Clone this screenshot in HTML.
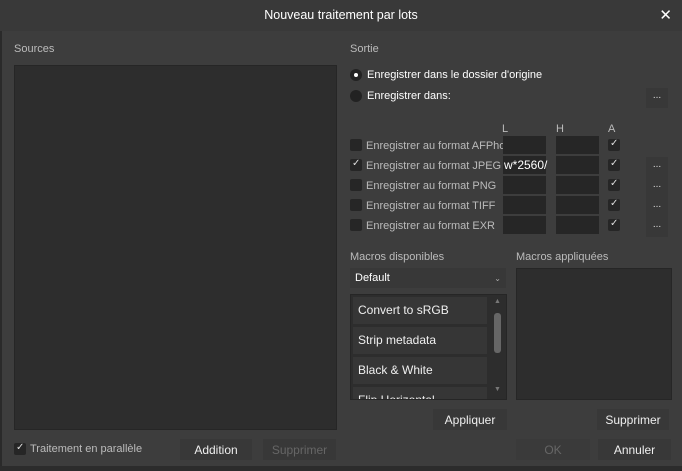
<!DOCTYPE html>
<html><head><meta charset="utf-8"><style>
*{margin:0;padding:0;box-sizing:border-box}
body{width:682px;height:471px;background:#3d3d3d;font-family:"Liberation Sans",Arial,sans-serif;font-size:11px;color:#ddd;position:relative;overflow:hidden}
.a{position:absolute}
.title{left:0;top:0;width:682px;height:31px;background:#393939;text-align:center;line-height:31px;color:#fff;font-size:12.5px}
.lbl{color:#bbb;font-size:11px;white-space:nowrap}
.fl{width:137px;overflow:hidden}
.box{background:#2d2d2d;border:1px solid #262626}
.cb{width:12px;height:12px;background:#262626;border-radius:2px}
.cb.on::after{content:"✓";color:#ddd;font-size:10px;position:absolute;left:2px;top:-1px}
.btn{background:#383838;color:#eee;font-size:12px;text-align:center}
.dots{width:22px;height:20px;background:#383838;color:#ddd;text-align:center;font-size:10px;line-height:16px}
.in{width:43px;height:18px;background:#262626}
.item{left:353px;width:134px;height:27px;background:#363636;color:#f0f0f0;font-size:12px;line-height:27px;padding-left:5px}
</style></head><body>
<div class="a title">Nouveau traitement par lots</div>
<div class="a" style="right:10px;top:6px;color:#fff;font-size:15px">✕</div>
<div class="a" style="left:0;top:31px;width:2px;height:440px;background:#2a2a2a"></div>
<div class="a lbl" style="left:14px;top:43px">Sources</div>
<div class="a box" style="left:14px;top:65px;width:323px;height:365px"></div>
<div class="a lbl" style="left:350px;top:43px">Sortie</div>
<div class="a" style="left:350px;top:69px;width:12px;height:12px;border-radius:50%;background:#222"><div class="a" style="left:4px;top:4px;width:4px;height:4px;border-radius:50%;background:#fff"></div></div>
<div class="a" style="left:367px;top:69px;color:#fff">Enregistrer dans le dossier d'origine</div>
<div class="a" style="left:350px;top:90px;width:12px;height:12px;border-radius:50%;background:#222"></div>
<div class="a" style="left:367px;top:90px;color:#fff">Enregistrer dans:</div>
<div class="a dots" style="left:646px;top:88px">...</div>
<div class="a lbl" style="left:502px;top:123px">L</div>
<div class="a lbl" style="left:556px;top:123px">H</div>
<div class="a lbl" style="left:608px;top:123px">A</div>

<div class="a cb" style="left:350px;top:139px"></div><div class="a lbl fl" style="left:366px;top:140px">Enregistrer au format AFPhoto</div>
<div class="a in" style="left:503px;top:136px"></div><div class="a in" style="left:556px;top:136px"></div><div class="a cb on" style="left:608px;top:139px"></div>

<div class="a cb on" style="left:350px;top:159px"></div><div class="a lbl fl" style="left:366px;top:160px">Enregistrer au format JPEG</div>
<div class="a in" style="left:503px;top:156px;color:#fff;font-size:12px;line-height:19px;padding-left:1px">w*2560/</div><div class="a in" style="left:556px;top:156px"></div><div class="a cb on" style="left:608px;top:159px"></div>
<div class="a dots" style="left:646px;top:157px">...</div>

<div class="a cb" style="left:350px;top:179px"></div><div class="a lbl fl" style="left:366px;top:180px">Enregistrer au format PNG</div>
<div class="a in" style="left:503px;top:176px"></div><div class="a in" style="left:556px;top:176px"></div><div class="a cb on" style="left:608px;top:179px"></div>
<div class="a dots" style="left:646px;top:177px">...</div>

<div class="a cb" style="left:350px;top:199px"></div><div class="a lbl fl" style="left:366px;top:200px">Enregistrer au format TIFF</div>
<div class="a in" style="left:503px;top:196px"></div><div class="a in" style="left:556px;top:196px"></div><div class="a cb on" style="left:608px;top:199px"></div>
<div class="a dots" style="left:646px;top:197px">...</div>

<div class="a cb" style="left:350px;top:219px"></div><div class="a lbl fl" style="left:366px;top:220px">Enregistrer au format EXR</div>
<div class="a in" style="left:503px;top:216px"></div><div class="a in" style="left:556px;top:216px"></div><div class="a cb on" style="left:608px;top:219px"></div>
<div class="a dots" style="left:646px;top:217px">...</div>

<div class="a lbl" style="left:350px;top:251px">Macros disponibles</div>
<div class="a lbl" style="left:516px;top:251px">Macros appliquées</div>
<div class="a" style="left:350px;top:268px;width:156px;height:20px;background:#383838;color:#fff;line-height:21px;padding-left:5px">Default<span style="position:absolute;right:5px;color:#aaa;font-size:8px">⌄</span></div>
<div class="a box" style="left:350px;top:294px;width:157px;height:106px;overflow:hidden"></div>
<div class="a item" style="top:297px">Convert to sRGB</div>
<div class="a item" style="top:327px">Strip metadata</div>
<div class="a item" style="top:357px">Black &amp; White</div>
<div class="a item" style="top:387px;height:12px;overflow:hidden">Flip Horizontal</div>
<div class="a" style="left:494px;top:298px;color:#777;font-size:7px">▲</div>
<div class="a" style="left:494px;top:313px;width:7px;height:40px;border-radius:3px;background:#666"></div>
<div class="a" style="left:494px;top:386px;color:#777;font-size:7px">▼</div>
<div class="a box" style="left:516px;top:268px;width:156px;height:132px"></div>
<div class="a btn" style="left:433px;top:409px;width:74px;height:21px;line-height:22px">Appliquer</div>
<div class="a btn" style="left:597px;top:409px;width:72px;height:21px;line-height:22px">Supprimer</div>

<div class="a cb on" style="left:14px;top:443px"></div>
<div class="a lbl" style="left:30px;top:443px">Traitement en parallèle</div>
<div class="a btn" style="left:180px;top:439px;width:72px;height:21px;line-height:22px">Addition</div>
<div class="a btn" style="left:263px;top:439px;width:73px;height:21px;line-height:22px;color:#666">Supprimer</div>
<div class="a btn" style="left:516px;top:439px;width:74px;height:21px;line-height:22px;color:#666;background:#3a3a3a">OK</div>
<div class="a btn" style="left:598px;top:439px;width:73px;height:21px;line-height:22px">Annuler</div>
<div class="a" style="left:0;top:466px;width:682px;height:5px;background:#2c2c2c"></div>
</body></html>
